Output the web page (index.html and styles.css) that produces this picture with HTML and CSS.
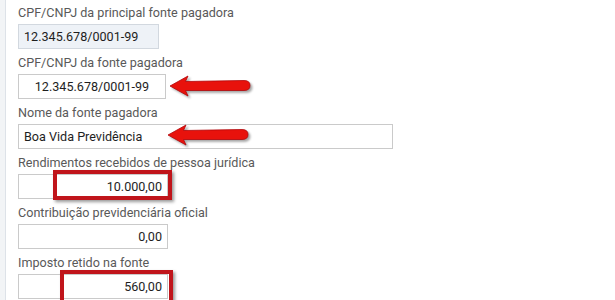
FILE: index.html
```html
<!DOCTYPE html>
<html lang="pt-BR">
<head>
    <meta charset="UTF-8">
    <meta name="viewport" content="width=device-width, initial-scale=1.0">
    <title>Fonte pagadora</title>
    <link rel="stylesheet" href="styles.css">
</head>
<body>

<div class="panel">
    <div class="field">
        <label class="field-label">CPF/CNPJ da principal fonte pagadora</label>
        <div class="input-wrap">
            <div class="input input-readonly w-small">12.345.678/0001-99</div>
        </div>
    </div>

    <div class="field">
        <label class="field-label">CPF/CNPJ da fonte pagadora</label>
        <div class="input-wrap">
            <div class="input input-center w-cnpj">12.345.678/0001-99</div>
            <svg class="arrow arrow-cnpj" viewBox="0 0 82 22">
                <path d="M1 11 L19 1 L16.5 6.5 L75 5.5 Q81 5.5 81 10.5 Q81 15.5 75 15.5 L16.5 15.5 L19 21 Z"/>
            </svg>
        </div>
    </div>

    <div class="field">
        <label class="field-label">Nome da fonte pagadora</label>
        <div class="input-wrap">
            <div class="input w-wide">Boa Vida Previdência</div>
            <svg class="arrow arrow-nome" viewBox="0 0 82 22">
                <path d="M1 11 L19 1 L16.5 6.5 L75 5.5 Q81 5.5 81 10.5 Q81 15.5 75 15.5 L16.5 15.5 L19 21 Z"/>
            </svg>
        </div>
    </div>

    <div class="field">
        <label class="field-label">Rendimentos recebidos de pessoa jurídica</label>
        <div class="input-wrap">
            <div class="input input-right w-money">10.000,00</div>
            <div class="highlight highlight-rend"></div>
        </div>
    </div>

    <div class="field">
        <label class="field-label">Contribuição previdenciária oficial</label>
        <div class="input-wrap">
            <div class="input input-right w-money">0,00</div>
        </div>
    </div>

    <div class="field">
        <label class="field-label">Imposto retido na fonte</label>
        <div class="input-wrap">
            <div class="input input-right w-money">560,00</div>
            <div class="highlight highlight-imposto"></div>
        </div>
    </div>
</div>

</body>
</html>
```

FILE: styles.css
```css
body {
    font-family: Roboto, "Liberation Sans", Arial, sans-serif;
    margin: 0;
    padding: 0;
    background-color: #f2f4f6;
    overflow: hidden;
}
.panel {
    margin-left: 5px;
    border-left: 1px solid #dde2e8;
    background-color: #fff;
    padding: 5px 0 0 12px;
    height: 295px;
}
.field {
    margin-bottom: 6px;
}
.field-label {
    display: block;
    font-size: 12.6px;
    line-height: 16px;
    color: #595959;
    margin-bottom: 3px;
}
.input-wrap {
    position: relative;
}
.input {
    box-sizing: border-box;
    height: 25px;
    line-height: 23px;
    padding: 0 5px;
    border: 1px solid #cacaca;
    background-color: #fff;
    font-size: 12.6px;
    color: #1e1e1e;
    white-space: nowrap;
}
.input-readonly {
    background-color: #eef2f7;
    border-color: #d2d8df;
}
.input-center {
    text-align: center;
}
.input-right {
    text-align: right;
}
.w-small {
    width: 141px;
}
.w-cnpj {
    width: 148px;
}
.w-wide {
    width: 375px;
}
.w-money {
    width: 150px;
}
.arrow {
    position: absolute;
    width: 82px;
    height: 22px;
    filter: drop-shadow(2px 2px 1px rgba(0, 0, 0, 0.35));
}
.arrow path {
    fill: #e8120c;
    stroke: #b0060a;
    stroke-width: 0.8;
}
.arrow-cnpj {
    left: 151px;
    top: 1px;
}
.arrow-nome {
    left: 149px;
    top: 0;
}
.highlight {
    position: absolute;
    box-sizing: border-box;
    border: 4px solid #c0151b;
    box-shadow: 2px 2px 3px rgba(0, 0, 0, 0.4);
}
.highlight-rend {
    left: 35px;
    top: -4px;
    width: 119px;
    height: 30px;
}
.highlight-imposto {
    left: 42px;
    top: -4px;
    width: 113px;
    height: 34px;
}
```
